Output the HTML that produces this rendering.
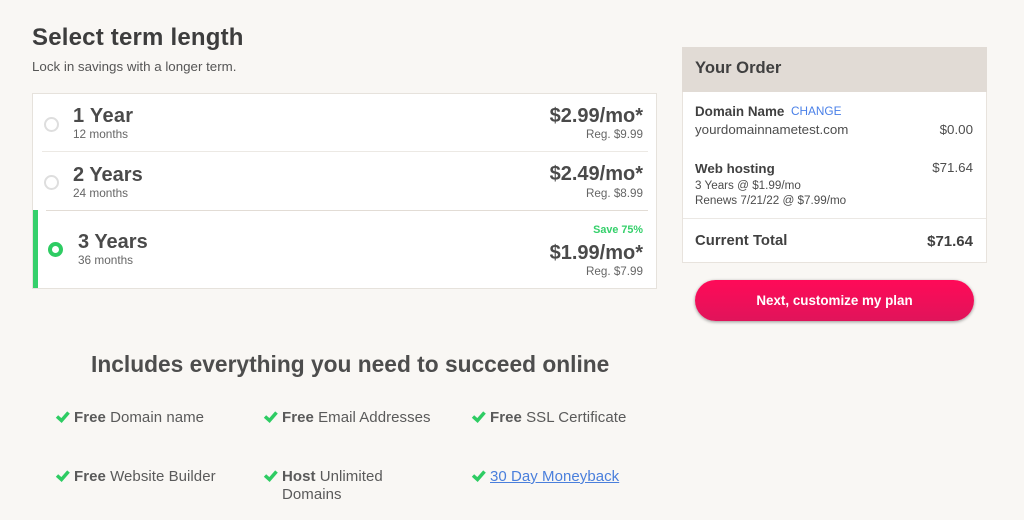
<!DOCTYPE html>
<html>
<head>
<meta charset="utf-8">
<style>
html,body{margin:0;padding:0;width:1024px;height:520px;overflow:hidden;background:#f9f7f4;font-family:"Liberation Sans",sans-serif;color:#4a4a4a}
.a{position:absolute;white-space:nowrap;line-height:1}
.b{font-weight:bold}
.r{text-align:right}
svg{position:absolute}
</style>
</head>
<body>
<div class="a b" style="left:32px;top:26px;font-size:24px;color:#3d3d3d;letter-spacing:.2px">Select term length</div>
<div class="a" style="left:32px;top:60px;font-size:13.33px;color:#555">Lock in savings with a longer term.</div>

<div style="position:absolute;left:32px;top:93px;width:623px;height:194px;background:#fff;border:1px solid #e6e2dc"></div>
<div style="position:absolute;left:42px;top:151px;width:606px;height:1px;background:#ece9e4"></div>
<div style="position:absolute;left:46px;top:210px;width:602px;height:1px;background:#e2dcd5"></div>
<div style="position:absolute;left:33px;top:210px;width:5px;height:78px;background:#35d06b"></div>

<div style="position:absolute;left:44px;top:117px;width:11px;height:11px;border:2px solid #dedede;border-radius:50%;background:#fff"></div>
<div style="position:absolute;left:44px;top:175px;width:11px;height:11px;border:2px solid #dedede;border-radius:50%;background:#fff"></div>
<div style="position:absolute;left:48px;top:242px;width:7px;height:7px;border:4px solid #2ecc63;border-radius:50%;background:#fff"></div>

<div class="a b" style="left:73px;top:106px;font-size:20px;letter-spacing:.3px">1 Year</div>
<div class="a" style="left:73px;top:129px;font-size:11.8px;color:#666">12 months</div>
<div class="a b" style="left:73px;top:165px;font-size:20px">2 Years</div>
<div class="a" style="left:73px;top:188px;font-size:11.8px;color:#666">24 months</div>
<div class="a b" style="left:78px;top:232px;font-size:20px">3 Years</div>
<div class="a" style="left:78px;top:255px;font-size:11.8px;color:#666">36 months</div>

<div class="a b r" style="right:381px;top:106px;font-size:20px">$2.99/mo*</div>
<div class="a r" style="right:381px;top:129px;font-size:11.67px;color:#666">Reg. $9.99</div>
<div class="a b r" style="right:381px;top:164px;font-size:20px">$2.49/mo*</div>
<div class="a r" style="right:381px;top:188px;font-size:11.67px;color:#666">Reg. $8.99</div>
<div class="a b r" style="right:381px;top:225px;font-size:10.8px;color:#35d06b">Save 75%</div>
<div class="a b r" style="right:381px;top:243px;font-size:20px">$1.99/mo*</div>
<div class="a r" style="right:381px;top:266px;font-size:11.67px;color:#666">Reg. $7.99</div>

<div style="position:absolute;left:682px;top:47px;width:305px;height:45px;background:#e1dbd5"></div>
<div style="position:absolute;left:682px;top:92px;width:303px;height:170px;background:#fff;border:1px solid #e8e3dd;border-top:0"></div>
<div style="position:absolute;left:683px;top:218px;width:303px;height:1px;background:#ebe8e4"></div>
<div class="a b" style="left:695px;top:60px;font-size:16.6px;color:#404040">Your Order</div>
<div class="a b" style="left:695px;top:105px;font-size:13.4px;color:#404040">Domain Name</div>
<div class="a" style="left:791px;top:106px;font-size:11.8px;color:#4a80e8">CHANGE</div>
<div class="a" style="left:695px;top:123px;font-size:13.33px;color:#4d4d4d">yourdomainnametest.com</div>
<div class="a r" style="right:51px;top:123px;font-size:13.33px;color:#4d4d4d">$0.00</div>
<div class="a b" style="left:695px;top:162px;font-size:13.33px;color:#404040">Web hosting</div>
<div class="a r" style="right:51px;top:161px;font-size:13.33px;color:#4d4d4d">$71.64</div>
<div class="a" style="left:695px;top:180px;font-size:11.67px;color:#4d4d4d">3 Years @ $1.99/mo</div>
<div class="a" style="left:695px;top:195px;font-size:11.67px;color:#4d4d4d">Renews 7/21/22 @ $7.99/mo</div>
<div class="a b" style="left:695px;top:234px;font-size:14.8px;color:#404040;letter-spacing:.05px">Current Total</div>
<div class="a b r" style="right:51px;top:234px;font-size:15px;color:#404040">$71.64</div>

<div class="a b" style="left:695px;top:280px;width:279px;height:41px;border-radius:21px;background:linear-gradient(#ff0a58,#e0145a);box-shadow:0 1px 3px rgba(0,0,0,.4);color:#fff;font-size:13.4px;line-height:42px;text-align:center">Next, customize my plan</div>

<div class="a b" style="left:91px;top:353px;font-size:22.75px;color:#4d4d4d">Includes everything you need to succeed online</div>

<svg style="left:0;top:0" width="1024" height="520" fill="none" stroke="#2ecc63" stroke-width="3.5">
<path d="M57 416.500L61.500 420.500L68.500 412.500"/>
<path d="M265 416.500L269.500 420.500L276.500 412.500"/>
<path d="M473 416.500L477.500 420.500L484.500 412.500"/>
<path d="M57 475.500L61.500 479.500L68.500 471.500"/>
<path d="M265 475.500L269.500 479.500L276.500 471.500"/>
<path d="M473 475.500L477.500 479.500L484.500 471.500"/>
</svg>

<div class="a" style="left:74px;top:410px;font-size:15px;color:#5a5a5a;letter-spacing:.05px"><b>Free</b> Domain name</div>
<div class="a" style="left:282px;top:410px;font-size:15px;color:#5a5a5a;letter-spacing:.05px"><b>Free</b> Email Addresses</div>
<div class="a" style="left:490px;top:410px;font-size:15px;color:#5a5a5a;letter-spacing:.05px"><b>Free</b> SSL Certificate</div>
<div class="a" style="left:74px;top:469px;font-size:15px;color:#5a5a5a;letter-spacing:.05px"><b>Free</b> Website Builder</div>
<div class="a" style="left:282px;top:469px;font-size:15px;color:#5a5a5a;letter-spacing:.05px"><b>Host</b> Unlimited</div>
<div class="a" style="left:282px;top:487px;font-size:15px;color:#5a5a5a;letter-spacing:.05px">Domains</div>
<div class="a" style="left:490px;top:469px;font-size:15px;color:#4a7fdc;text-decoration:underline;letter-spacing:.05px">30 Day Moneyback</div>
</body>
</html>
